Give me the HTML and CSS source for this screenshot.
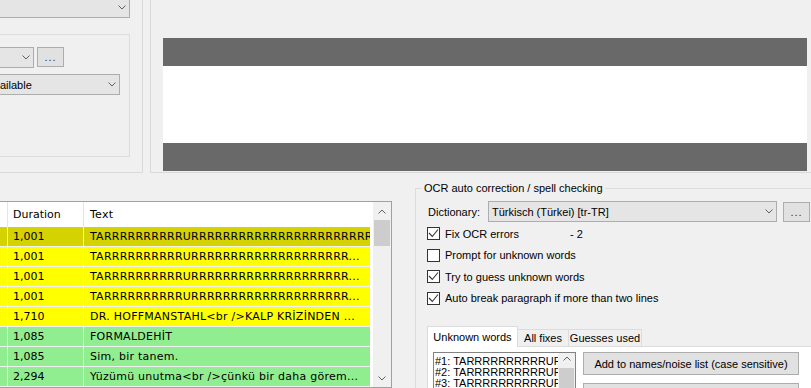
FILE: index.html
```html
<!DOCTYPE html>
<html>
<head>
<meta charset="utf-8">
<link rel="stylesheet" href="styles.css">
</head>
<body>
<div class="top">
  <div class="left-pane">
    <div class="combo combo-top"><span class="ctext"></span><svg class="chev" viewBox="0 0 8 5" width="8" height="5"><polyline points="0.5,0.5 4,4 7.5,0.5"/></svg></div>
    <div class="groupbox">
      <div class="gb-row">
        <div class="combo combo-small"><span class="ctext"></span><svg class="chev" viewBox="0 0 8 5" width="8" height="5"><polyline points="0.5,0.5 4,4 7.5,0.5"/></svg></div>
        <div class="btn btn-dots">...</div>
      </div>
      <div class="combo combo-wide"><span class="ctext">ailable</span><svg class="chev" viewBox="0 0 8 5" width="8" height="5"><polyline points="0.5,0.5 4,4 7.5,0.5"/></svg></div>
    </div>
  </div>
  <div class="preview-pane">
    <div class="preview">
      <div class="pv-bar"></div>
      <div class="pv-white"></div>
      <div class="pv-bar"></div>
    </div>
  </div>
</div>
<div class="bottom">
  <div class="listview">
    <div class="lv-body">
      <div class="lv-row lv-head"><div class="c0"></div><div class="c1">Duration</div><div class="c2">Text</div></div>
      <div class="lv-row r-sel"><div class="c0"></div><div class="c1">1,001</div><div class="c2">TARRRRRRRRRRURRRRRRRRRRRRRRRRRRRRRRRRRRR</div></div>
      <div class="lv-row r-yel"><div class="c0"></div><div class="c1">1,001</div><div class="c2">TARRRRRRRRRRURRRRRRRRRRRRRRRRRRRR...</div></div>
      <div class="lv-row r-yel"><div class="c0"></div><div class="c1">1,001</div><div class="c2">TARRRRRRRRRRURRRRRRRRRRRRRRRRRRRR...</div></div>
      <div class="lv-row r-yel"><div class="c0"></div><div class="c1">1,001</div><div class="c2">TARRRRRRRRRRURRRRRRRRRRRRRRRRRRRR...</div></div>
      <div class="lv-row r-yel"><div class="c0"></div><div class="c1">1,710</div><div class="c2">DR. HOFFMANSTAHL&lt;br /&gt;KALP KRİZİNDEN ...</div></div>
      <div class="lv-row r-grn"><div class="c0"></div><div class="c1">1,085</div><div class="c2">FORMALDEHİT</div></div>
      <div class="lv-row r-grn"><div class="c0"></div><div class="c1">1,085</div><div class="c2">Sim, bir tanem.</div></div>
      <div class="lv-row r-grn"><div class="c0"></div><div class="c1">2,294</div><div class="c2">Yüzümü unutma&lt;br /&gt;çünkü bir daha görem...</div></div>
    </div>
    <div class="vscroll">
      <div class="sb-btn sb-up"><svg class="chev" viewBox="0 0 8 5" width="8" height="5"><polyline points="0.5,4.5 4,1 7.5,4.5"/></svg></div>
      <div class="sb-thumb"></div>
      <div class="sb-track"></div>
      <div class="sb-btn sb-down"><svg class="chev" viewBox="0 0 8 5" width="8" height="5"><polyline points="0.5,0.5 4,4 7.5,0.5"/></svg></div>
    </div>
  </div>
  <fieldset class="ocr">
    <legend>OCR auto correction / spell checking</legend>
    <div class="dict-row">
      <span class="dict-label">Dictionary:</span>
      <div class="combo combo-dict"><span class="ctext">Türkisch (Türkei) [tr-TR]</span><svg class="chev" viewBox="0 0 8 5" width="8" height="5"><polyline points="0.5,0.5 4,4 7.5,0.5"/></svg></div>
      <div class="btn btn-dots2">...</div>
    </div>
    <div class="checks">
      <div class="chk-row"><span class="cb"><svg viewBox="0 0 11 11" width="11" height="11"><polyline points="1,5 4.3,8.5 10,1.5"/></svg></span><span class="chk-label fix">Fix OCR errors</span><span>- 2</span></div>
      <div class="chk-row"><span class="cb"></span><span class="chk-label">Prompt for unknown words</span></div>
      <div class="chk-row"><span class="cb"><svg viewBox="0 0 11 11" width="11" height="11"><polyline points="1,5 4.3,8.5 10,1.5"/></svg></span><span class="chk-label">Try to guess unknown words</span></div>
      <div class="chk-row"><span class="cb"><svg viewBox="0 0 11 11" width="11" height="11"><polyline points="1,5 4.3,8.5 10,1.5"/></svg></span><span class="chk-label">Auto break paragraph if more than two lines</span></div>
    </div>
    <div class="tabs">
      <div class="tab active">Unknown words</div>
      <div class="tab t2">All fixes</div>
      <div class="tab t3">Guesses used</div>
    </div>
    <div class="tab-panel">
      <div class="listbox">
        <div class="lb-items">
          <div>#1: TARRRRRRRRRRURRRRR</div>
          <div>#2: TARRRRRRRRRRURRRRR</div>
          <div>#3: TARRRRRRRRRRURRRRR</div>
          <div>#4: TARRRRRRRRRRURRRRR</div>
        </div>
        <div class="lb-scroll">
          <div class="sb-btn lb-up"><svg class="chev" viewBox="0 0 8 5" width="8" height="5"><polyline points="0.5,4.5 4,1 7.5,4.5"/></svg></div>
          <div class="sb-thumb lb-thumb"></div>
        </div>
      </div>
      <div class="btn-col">
        <div class="btn btn-wide">Add to names/noise list (case sensitive)</div>
        <div class="btn btn-wide"></div>
      </div>
    </div>
  </fieldset>
</div>
</body>
</html>
```
FILE: styles.css
```css
* { box-sizing: border-box; }
html, body { margin: 0; padding: 0; }
body {
  width: 811px;
  height: 388px;
  overflow: hidden;
  background: #f0f0f0;
  font-family: "Liberation Sans", Arial, sans-serif;
  font-size: 11px;
  color: #000;
}

/* ---------- common controls ---------- */
.combo {
  display: flex;
  align-items: center;
  justify-content: space-between;
  background: #e5e5e5;
  border: 1px solid #adadad;
  padding: 0 3px 0 0;
  overflow: hidden;
  white-space: nowrap;
}
.chev { flex: none; display: block; }
.chev polyline { fill: none; stroke: #606060; stroke-width: 1; }
.btn {
  display: flex;
  align-items: center;
  justify-content: center;
  background: #e1e1e1;
  border: 1px solid #adadad;
  white-space: nowrap;
}
.btn-dots { letter-spacing: 1px; color: #333; }

/* ---------- top section ---------- */
.top { display: flex; height: 173px; }
.left-pane {
  flex: none;
  width: 143px;
  height: 173px;
  border-right: 1px solid #d9d9d9;
  border-bottom: 1px solid #d9d9d9;
}
.combo-top { margin: -4px 0 0 -2px; width: 132px; height: 22px; }
.groupbox {
  margin: 16px 0 0 -2px;
  width: 132px;
  height: 123px;
  border: 1px solid #dcdcdc;
  padding-top: 12px;
}
.gb-row { display: flex; align-items: flex-start; }
.combo-small { width: 35px; height: 21px; }
.btn-dots { margin-left: 3px; width: 27px; height: 20px; }
.combo-wide { margin-top: 6px; width: 121px; height: 21px; }
.combo-wide .ctext { padding-left: 0; }

.preview-pane {
  margin-left: 7px;
  flex: 1;
  height: 173px;
  border-left: 1px solid #d9d9d9;
  border-bottom: 1px solid #d9d9d9;
  padding: 38px 0 0 12px;
}
.preview { width: 644px; display: flex; flex-direction: column; }
.pv-bar { height: 28px; background: #696969; }
.pv-white { height: 77px; background: #fff; }

/* ---------- bottom section ---------- */
.bottom { display: flex; align-items: flex-start; height: 215px; }

.listview {
  flex: none;
  margin: 28px 0 0 -1px;
  width: 393px;
  height: 187px;
  border: 1px solid #a0a0a0;
  background: #fff;
  display: flex;
  font-family: "DejaVu Sans", Verdana, sans-serif;
  font-size: 11px;
}
.lv-body { width: 373px; overflow: hidden; }
.lv-row {
  width: 370px;
  height: 20px;
  display: flex;
  align-items: stretch;
  border-bottom: 1px solid #f0f0f0;
  white-space: nowrap;
}
.lv-row > div { display: flex; align-items: center; overflow: hidden; }
.lv-head { height: 25px; border-bottom: none; background: #fff; }
.c0 { width: 8px; border-right: 1px solid #efefef; }
.c1 { width: 76px; border-right: 1px solid #efefef; padding-left: 5px; }
.c2 { width: 286px; padding-left: 6px; letter-spacing: 0.25px; }
.lv-head .c0, .lv-head .c1 { border-right-color: #e5e5e5; }
.r-sel { background: #d4d200; }
.r-yel { background: #ffff00; }
.r-grn { background: #90ee90; }

.vscroll {
  width: 18px;
  display: flex;
  flex-direction: column;
  background: #f0f0f0;
}
.sb-btn { display: flex; align-items: center; justify-content: center; }
.sb-up { height: 18px; }
.sb-thumb { height: 26px; margin: 0 1px; background: #cdcdcd; }
.sb-track { flex: 1; }
.sb-down { height: 17px; }

/* ---------- OCR group ---------- */
.ocr {
  flex: none;
  margin: 8px 0 0 23px;
  width: 420px;
  min-width: 0;
  height: 260px;
  border: 1px solid #dcdcdc;
  padding: 6px 0 0 11px;
}
.ocr legend {
  margin-left: -5px;
  padding: 0 2px;
  line-height: 14px;
}
.dict-row { display: flex; align-items: center; height: 21px; }
.dict-label { width: 61px; padding-left: 1px; }
.combo-dict { width: 289px; height: 21px; }
.combo-dict .ctext { padding-left: 3px; }
.btn-dots2 { margin-left: 6px; width: 27px; height: 20px; letter-spacing: 1px; color: #333; }

.checks { margin-top: 1px; }
.chk-row { display: flex; align-items: center; height: 21.5px; white-space: nowrap; }
.cb {
  flex: none;
  width: 13px;
  height: 13px;
  border: 1px solid #333;
  background: #fff;
  display: block;
}
.cb svg { display: block; }
.cb polyline { fill: none; stroke: #333; stroke-width: 1.1; }
.chk-label { margin-left: 5px; }
.chk-label.fix { width: 125px; }

.tabs { display: flex; align-items: flex-end; height: 20px; margin-top: 17px; }
.tab {
  height: 17px;
  border: 1px solid #dcdcdc;
  border-bottom: none;
  background: #f0f0f0;
  display: flex;
  align-items: center;
  justify-content: center;
  white-space: nowrap;
}
.tab.active {
  width: 91px;
  height: 21px;
  margin-bottom: -1px;
  background: #fff;
  position: relative;
  z-index: 1;
}
.t2 { width: 52px; margin-left: -1px; }
.t3 { width: 74px; margin-left: -1px; }

.tab-panel {
  width: 400px;
  height: 100px;
  border: 1px solid #dcdcdc;
  background: #fff;
  padding: 5px 0 0 5px;
  display: flex;
  align-items: flex-start;
}
.listbox {
  flex: none;
  width: 143px;
  height: 80px;
  border: 1px solid #828282;
  background: #fff;
  display: flex;
}
.lb-items {
  width: 124px;
  overflow: hidden;
  white-space: nowrap;
  padding: 3px 0 0 1px;
  line-height: 11px;
}
.lb-scroll { width: 17px; background: #f0f0f0; display: flex; flex-direction: column; }
.lb-up { height: 15px; align-items: flex-start; padding-top: 3px; }
.lb-thumb { height: 40px; }
.btn-col { margin-left: 7px; display: flex; flex-direction: column; gap: 8px; }
.btn-wide { width: 216px; height: 23px; }
```
